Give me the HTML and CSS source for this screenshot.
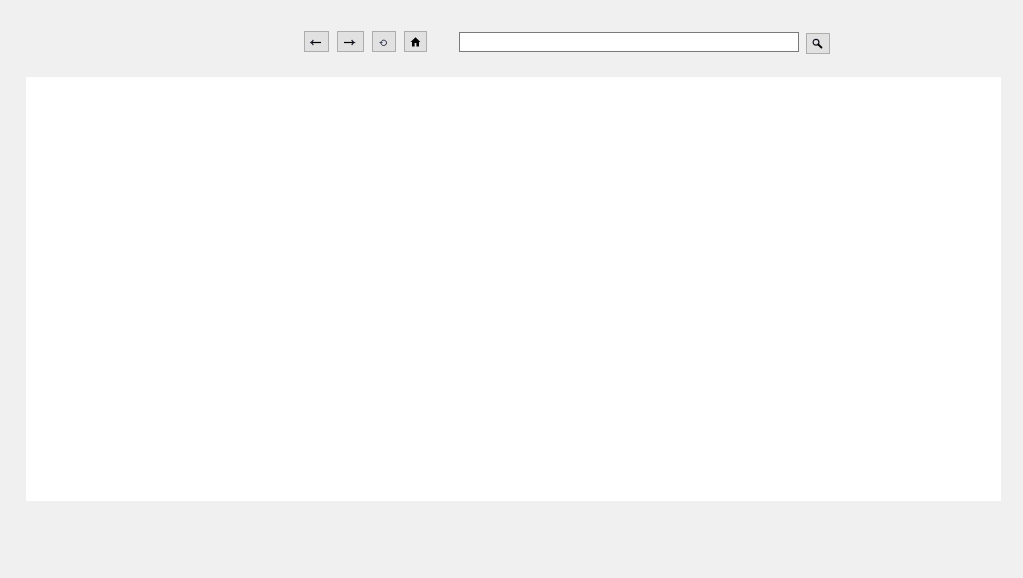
FILE: index.html
```
<!DOCTYPE html>
<html lang="en">
<head>
    <meta charset="UTF-8">
    <meta name="viewport" content="width=device-width, initial-scale=1.0">
    <title>Browser</title>
    <link rel="stylesheet" href="styles.css">
</head>
<body>
    <!-- Toolbar -->
    <header class="toolbar">
        <nav class="nav-buttons">
            <button type="button" class="back" id="backButton" aria-label="Back">
                <svg width="13" height="11" viewBox="0 0 13 11">
                    <path d="M1 6.5H11" fill="none" stroke="#000" stroke-width="1.2"/>
                    <path d="M3.2 3.8C3 5.2 2 6 0.7 6.5C2 7 3 7.8 3.2 9.2" fill="none" stroke="#223" stroke-width="1.2"/>
                </svg>
            </button>
            <button type="button" class="forward" id="forwardButton" aria-label="Forward">
                <svg width="13" height="11" viewBox="0 0 13 11">
                    <path d="M0 6.5H10" fill="none" stroke="#000" stroke-width="1.2"/>
                    <path d="M7.8 3.8C8 5.2 9 6 10.3 6.5C9 7 8 7.8 7.8 9.2" fill="none" stroke="#223" stroke-width="1.2"/>
                </svg>
            </button>
            <button type="button" class="reload" id="reloadButton" aria-label="Reload">
                <svg width="10" height="11" viewBox="0 0 10 11">
                    <path d="M2.2 8C2.7 9 3.6 9.5 4.6 9.5C6.3 9.5 7.5 8.4 7.5 6.8C7.5 5.2 6.3 4.2 4.6 4.2C3.3 4.2 2.3 5 2.1 6.3" fill="none" stroke="#224"/>
                    <path d="M0 6H4L2 8Z" fill="#345"/>
                </svg>
            </button>
            <button type="button" class="home" id="homeButton" aria-label="Home">
                <svg width="11" height="11" viewBox="0 0 11 11">
                    <path d="M5.5 1.2L0.6 6H2V10.4H4.6V7H6.4V10.4H9V6H10.4Z" fill="#000"/>
                </svg>
            </button>
        </nav>

        <form class="search-form" id="searchForm">
            <input type="text" id="address" aria-label="Address">
            <button type="submit" class="search" aria-label="Search">
                <svg width="12" height="11" viewBox="0 0 12 11">
                    <circle cx="4" cy="4.2" r="2.9" fill="none" stroke="#112" stroke-width="1.2"/>
                    <path d="M6.2 6.4L9.4 9.5" stroke="#000" stroke-width="1.9" stroke-linecap="round"/>
                </svg>
            </button>
        </form>
    </header>

    <!-- Page view -->
    <main class="page-view" id="pageView"></main>

    <script>
        const address = document.getElementById('address');

        document.getElementById('backButton').addEventListener('click', () => history.back());
        document.getElementById('forwardButton').addEventListener('click', () => history.forward());
        document.getElementById('reloadButton').addEventListener('click', () => location.reload());
        document.getElementById('homeButton').addEventListener('click', () => {
            address.value = '';
        });
        document.getElementById('searchForm').addEventListener('submit', (e) => e.preventDefault());
    </script>
</body>
</html>
```
FILE: styles.css
```
* {
    box-sizing: border-box;
}
body {
    font-family: "Liberation Sans", Arial, sans-serif;
    margin: 0;
    background-color: #f0f0f0;
    display: flex;
    flex-direction: column;
    min-height: 100vh;
}
.toolbar {
    display: flex;
    justify-content: center;
    align-items: flex-start;
    gap: 32px;
    padding: 31px 0 23px 111px;
}
.nav-buttons {
    display: flex;
    gap: 8px;
}
button {
    display: flex;
    align-items: center;
    justify-content: center;
    width: 24px;
    height: 21px;
    padding: 0;
    border: 1px solid #adadad;
    background-color: #e1e1e1;
    cursor: pointer;
}
button:hover {
    background-color: #e5f1fb;
}
.back {
    width: 25px;
}
.forward {
    width: 27px;
}
.home {
    width: 23px;
}
.search-form {
    display: flex;
    align-items: flex-start;
    gap: 7px;
    height: 23px;
    padding-top: 1px;
}
.search-form input {
    width: 340px;
    height: 20px;
    padding: 1px 2px;
    border: 1px solid #7a7a7a;
    background-color: #fff;
}
.search {
    align-self: flex-end;
}
.page-view {
    flex: 1;
    margin: 0 22px 77px 26px;
    background-color: #fff;
}
```
